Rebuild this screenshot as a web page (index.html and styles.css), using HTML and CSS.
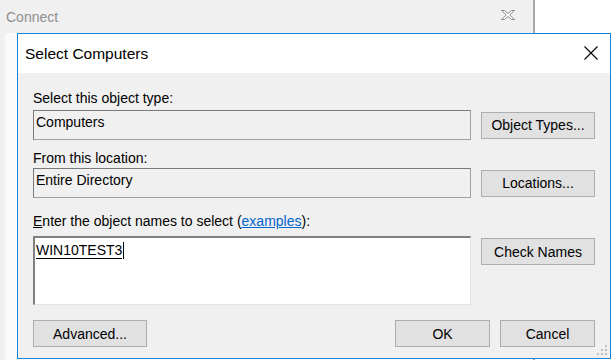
FILE: index.html
```html
<!DOCTYPE html>
<html lang="en">
<head>
    <meta charset="UTF-8">
    <title>Select Computers</title>
    <link rel="stylesheet" href="styles.css">
</head>
<body>
<div class="desktop">
    <div class="connect">
        <div class="connect-title">
            <span>Connect</span>
            <svg class="connect-close" width="16" height="12" viewBox="0 0 16 12">
                <path d="M1.5 1.5h3l3.5 3 3.5-3h3l-4.8 4.5 4.8 4.5h-3l-3.5-3-3.5 3h-3l4.8-4.5z" fill="#fff" stroke="#8c8c8c" stroke-width="1"/>
            </svg>
        </div>
        <div class="connect-body"></div>
    </div>

    <div class="dialog">
        <div class="dialog-title">
            <span>Select Computers</span>
            <svg class="dialog-close" width="14" height="14" viewBox="0 0 14 14">
                <path d="M0.5 0.5L13.5 13.5M13.5 0.5L0.5 13.5" stroke="#000" stroke-width="1.1"/>
            </svg>
        </div>
        <div class="dialog-body">
            <div class="label label-first">Select this object type:</div>
            <div class="row">
                <div class="field">Computers</div>
                <button class="btn">Object Types...</button>
            </div>

            <div class="label label-second">From this location:</div>
            <div class="row">
                <div class="field">Entire Directory</div>
                <button class="btn">Locations...</button>
            </div>

            <div class="label label-third"><u>E</u>nter the object names to select (<a href="#">examples</a>):</div>
            <div class="row row-names">
                <div class="names"><span class="typed">WIN10TEST3</span><span class="caret"></span></div>
                <button class="btn btn-check">Check Names</button>
            </div>

            <div class="actions">
                <button class="btn btn-advanced">Advanced...</button>
                <button class="btn btn-ok">OK</button>
                <button class="btn btn-cancel">Cancel</button>
            </div>
        </div>
        <div class="grip">
            <i style="left:8px;top:0"></i>
            <i style="left:4px;top:4px"></i>
            <i style="left:8px;top:4px"></i>
            <i style="left:0;top:8px"></i>
            <i style="left:4px;top:8px"></i>
            <i style="left:8px;top:8px"></i>
        </div>
    </div>
</div>
</body>
</html>
```

FILE: styles.css
```css
html, body {
    margin: 0;
    padding: 0;
}

body {
    width: 614px;
    height: 360px;
    overflow: hidden;
    background: #fff;
    font-family: "Liberation Sans", Arial, sans-serif;
    font-size: 14px;
    color: #000;
}

.desktop {
    position: relative;
    width: 614px;
    height: 360px;
}

/* window behind */
.connect {
    width: 533px;
    height: 360px;
    background: #f0f0f0;
    border-right: 2px solid #a8a8a8;
    display: flex;
    flex-direction: column;
}

.connect-title {
    height: 33px;
    display: flex;
    align-items: center;
    padding: 0 0 0 6px;
    color: #8f8f8f;
    font-size: 14px;
    position: relative;
}

.connect-close {
    position: absolute;
    left: 500px;
    top: 9px;
}

.connect-body {
    flex: 1;
    margin-left: 5px;
    background: #fafafa;
}

/* dialog */
.dialog {
    position: absolute;
    left: 17px;
    top: 33px;
    width: 594px;
    height: 326px;
    box-sizing: border-box;
    border: 1px solid #1c84d6;
    background: #f0f0f0;
    display: flex;
    flex-direction: column;
}

.dialog-title {
    height: 39px;
    background: #fff;
    display: flex;
    align-items: center;
    justify-content: space-between;
    padding: 0 12px 0 7px;
    font-size: 15.5px;
}

.dialog-close {
    margin-top: -1px;
}

.dialog-body {
    padding: 17px 15px 0 15px;
}

.label {
    line-height: 16px;
    height: 16px;
    white-space: nowrap;
}

.label-first {
    margin-bottom: 4px;
}

.label-second {
    margin-top: 10px;
    margin-bottom: 2px;
}

.label-third {
    margin-top: 15px;
    margin-bottom: 7px;
}

.label a {
    color: #0066cc;
}

.row {
    display: grid;
    grid-template-columns: 1fr 114px;
    column-gap: 10px;
    align-items: center;
    height: 30px;
}

.field {
    height: 30px;
    box-sizing: border-box;
    border: 1px solid #7a7a7a;
    border-right-color: #a0a0a0;
    border-bottom-color: #a0a0a0;
    padding: 3px 2px 0;
    line-height: 16px;
}

.btn {
    height: 27px;
    box-sizing: border-box;
    border: 1px solid #adadad;
    background: #e1e1e1;
    font-family: "Liberation Sans", Arial, sans-serif;
    font-size: 14px;
    color: #000;
    padding: 0;
    margin: 0;
}

.row-names {
    height: 69px;
    align-items: start;
}

.names {
    height: 69px;
    box-sizing: border-box;
    background: #fff;
    border: 1px solid #e3e3e3;
    border-top: 2px solid #808080;
    border-left: 2px solid #808080;
    padding: 4px 0 0 1px;
    line-height: 16px;
    display: flex;
    align-items: flex-start;
}

.typed {
    border-bottom: 1px solid #000;
}

.caret {
    width: 1px;
    height: 17px;
    background: #000;
    margin-left: 1px;
}

.btn-check {
    margin-top: 2px;
}

.actions {
    display: flex;
    margin-top: 15px;
}

.btn-advanced {
    width: 114px;
}

.btn-ok {
    width: 95px;
    margin-left: auto;
}

.btn-cancel {
    width: 95px;
    margin-left: 10px;
}

.grip {
    position: absolute;
    right: 3px;
    bottom: 3px;
    width: 10px;
    height: 10px;
}

.grip i {
    position: absolute;
    width: 2px;
    height: 2px;
    background: #bdbdbd;
}
```
